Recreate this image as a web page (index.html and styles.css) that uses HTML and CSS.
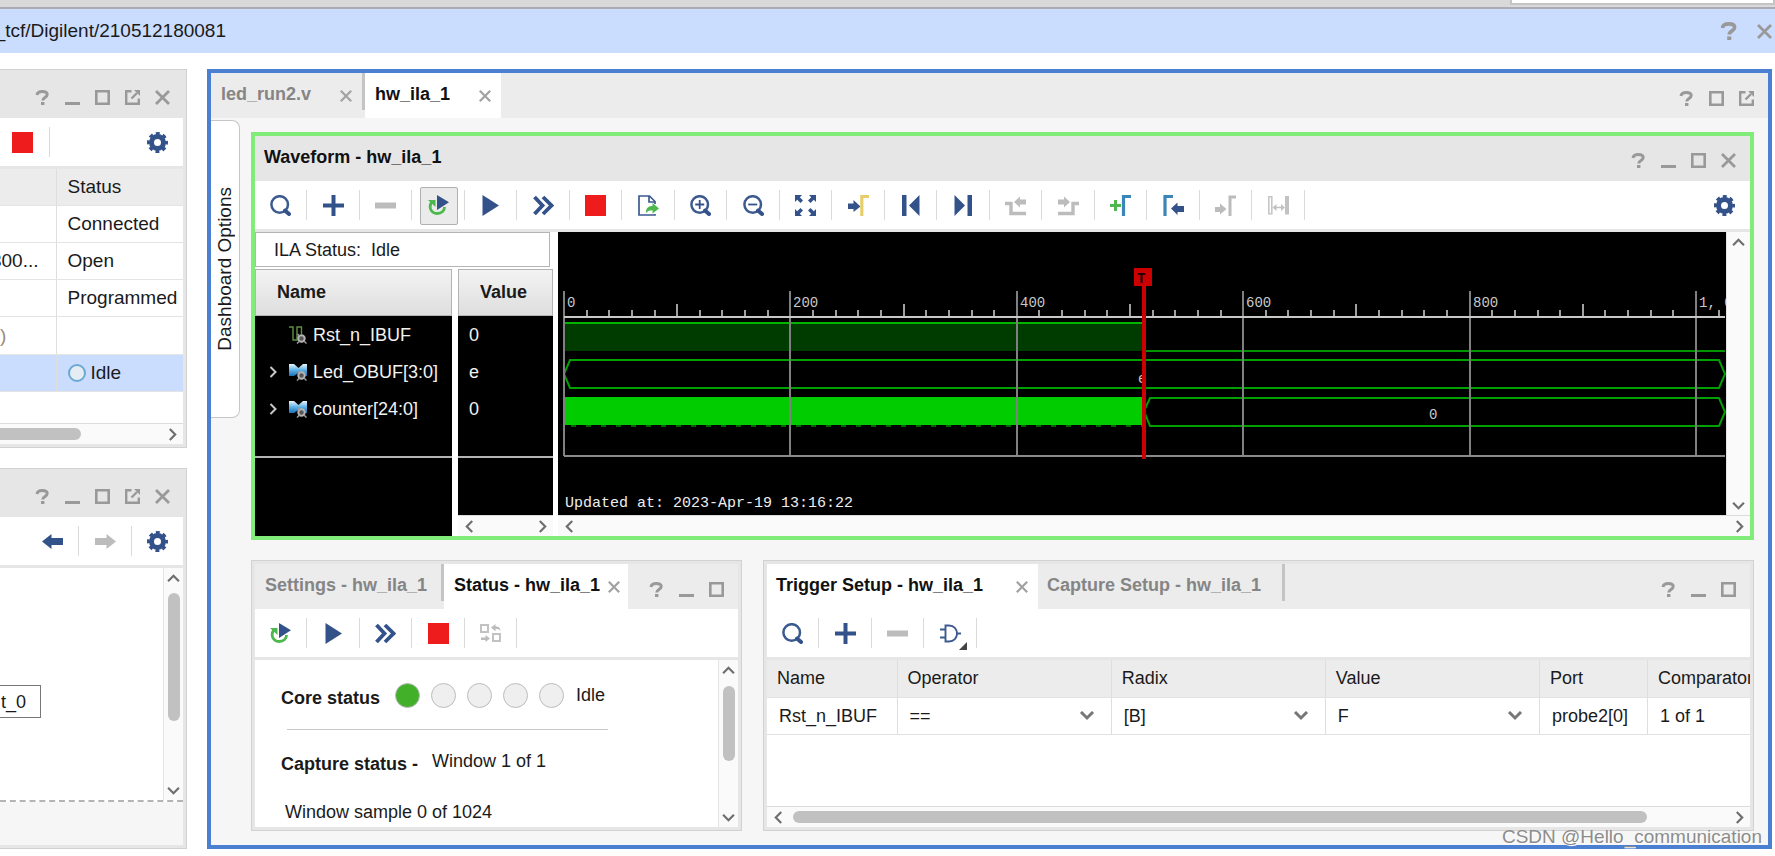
FILE: index.html
```html
<!DOCTYPE html>
<html lang="en">
<head>
    <meta charset="UTF-8">
    <meta name="viewport" content="width=device-width, initial-scale=1.0">
    <title>Hardware Manager - hw_ila_1</title>
    <link rel="stylesheet" href="styles.css">
</head>
<body>
    <!-- icon set -->
    <svg class="defs" aria-hidden="true">
        <defs>
            <linearGradient id="bus-fill" x1="0" y1="0" x2="0" y2="1">
                <stop offset="0" stop-color="#e8f6fd"/>
                <stop offset="0.5" stop-color="#5db2e6"/>
                <stop offset="1" stop-color="#1b6fb5"/>
            </linearGradient>
        </defs>
        <symbol id="help" viewBox="0 0 15 15"><path d="M2 5C2.300 2.500 4.500 1.600 7.400 1.600c3 0 4.800 1.100 4.800 3 0 2.800-4.500 2.800-4.500 5.800" fill="none" stroke="currentColor" stroke-width="3"/><path d="M6 12h3.400v3H6z" fill="currentColor"/></symbol>
        <symbol id="min" viewBox="0 0 15 15"><path d="M0 12h15v3H0z" fill="currentColor"/></symbol>
        <symbol id="max" viewBox="0 0 15 15"><path d="M1.300 1.300h12.400v12.400H1.300z" fill="none" stroke="currentColor" stroke-width="2.600"/></symbol>
        <symbol id="float" viewBox="0 0 15 15"><path d="M6.500 1.200H1.200v12.600h12.600V8.500M6.500 8.500l5.500-5.500" fill="none" stroke="currentColor" stroke-width="2.400"/><path d="M9 0h6v6z" fill="currentColor"/></symbol>
        <symbol id="close" viewBox="0 0 15 15"><path d="M1 1l13 13M14 1L1 14" fill="none" stroke="currentColor" stroke-width="2.800"/></symbol>
        <symbol id="search" viewBox="0 0 21 21"><circle cx="9.700" cy="9.500" r="8.300" fill="none" stroke="#3c5a8f" stroke-width="2.500"/><path d="M15 15.500l4 3.500" stroke="#34528a" stroke-width="4" stroke-linecap="round"/></symbol>
        <symbol id="plus" viewBox="0 0 21 21"><path d="M8.500 0h4v8.500H21v4h-8.500V21h-4v-8.500H0v-4h8.500z" fill="#34528a"/></symbol>
        <symbol id="minus" viewBox="0 0 21 21"><path d="M0 7.500h21v6H0z" fill="#bcbcbc"/></symbol>
        <symbol id="rerun" viewBox="0 0 21 21"><path d="M4 6.500C0 12 3 18.500 9 18.500c5 0 7.500-3 7.500-6.500" fill="none" stroke="#4cb84e" stroke-width="2.800"/><path d="M0 5h7.500v7z" fill="#4cb84e"/><path d="M9 0l12 7.200L9 15z" fill="#34528a"/></symbol>
        <symbol id="play" viewBox="0 0 21 21"><path d="M2.500 0L19 10.500 2.500 21z" fill="#34528a"/></symbol>
        <symbol id="forward" viewBox="0 0 21 21"><path d="M1.500 2l8 8.500-8 8.500M10 2l8.500 8.500L10 19" fill="none" stroke="#34528a" stroke-width="3.800"/></symbol>
        <symbol id="stop" viewBox="0 0 21 21"><path d="M0 0h21v21H0z" fill="#ee1c1c"/></symbol>
        <symbol id="export" viewBox="0 0 21 21"><path d="M17 9V6.500L11.500 1H1v19h16v-1M11 1v6h6" fill="none" stroke="#3c5a8f" stroke-width="1.700"/><path d="M8 18c0-5 2-7 6.500-7V8l6.500 5.500-6.500 5v-3.200c-3 0-4.500.7-6.500 2.700z" fill="#4cb84e"/></symbol>
        <symbol id="zoom-in" viewBox="0 0 21 21"><use href="#search"/><path d="M9.700 5v9M5.200 9.500h9" stroke="#34528a" stroke-width="1.800"/></symbol>
        <symbol id="zoom-out" viewBox="0 0 21 21"><use href="#search"/><path d="M5.200 9.500h9" stroke="#34528a" stroke-width="1.800"/></symbol>
        <symbol id="fit" viewBox="0 0 21 21"><path d="M0 0h7L4.800 2.200 8 5.500 5.500 8 2.200 4.800 0 7zM21 0v7l-2.200-2.200L15.500 8 13 5.500l3.200-3.300L14 0zM0 21v-7l2.200 2.200L5.500 13 8 15.500l-3.200 3.300L7 21zM21 21h-7l2.200-2.200-3.200-3.300 2.500-2.500 3.300 3.200L21 14z" fill="#34528a"/></symbol>
        <symbol id="to-cursor" viewBox="0 0 21 21"><path d="M0 8.500h5.500V5l7 6.500-7 5.500v-3H0z" fill="#34528a"/><path d="M13.800 21V1.500H21" fill="none" stroke="#e6cf6b" stroke-width="3.200"/></symbol>
        <symbol id="first" viewBox="0 0 21 21"><path d="M2 0h4.500v21H2zM19.500 0v21L9 10.500z" fill="#34528a"/></symbol>
        <symbol id="last" viewBox="0 0 21 21"><path d="M14.500 0H19v21h-4.500zM1.500 0v21L12 10.500z" fill="#34528a"/></symbol>
        <symbol id="prev-edge" viewBox="0 0 21 21"><path d="M0 8.500h6v10h15" fill="none" stroke="#bcbcbc" stroke-width="3.400"/><path d="M9 7l6-5.500V4.500h6v5h-6v3z" fill="#bcbcbc"/></symbol>
        <symbol id="next-edge" viewBox="0 0 21 21"><path d="M21 8.500h-6v10H0" fill="none" stroke="#bcbcbc" stroke-width="3.400"/><path d="M12 7L6 1.500V4.500H0v5h6v3z" fill="#bcbcbc"/></symbol>
        <symbol id="add-marker" viewBox="0 0 21 21"><path d="M4 5h3v4h4v3H7v4H4v-4H0V9h4z" fill="#4cb84e"/><path d="M13.500 21V1.500H21" fill="none" stroke="#3b86b8" stroke-width="3.200"/></symbol>
        <symbol id="prev-marker" viewBox="0 0 21 21"><path d="M2 21V1.500h8" fill="none" stroke="#3b86b8" stroke-width="3.200"/><path d="M8 13.500L14.500 7.500V11H21v6h-6.500v3z" fill="#34528a"/></symbol>
        <symbol id="next-marker" viewBox="0 0 21 21"><path d="M0 12h5V8.500l6.500 5.500-6.500 5.500V17H0z" fill="#bcbcbc"/><path d="M15 21V2h6" fill="none" stroke="#bcbcbc" stroke-width="3"/></symbol>
        <symbol id="measure" viewBox="0 0 21 21"><path d="M.8 1.800h3v17h-3z" fill="none" stroke="#c6c6c6" stroke-width="1.600"/><path d="M17 1h4v18.500h-4zM4.500 12.500l4-3.500v2.700h4.500V9l4 3.500-4 3.500v-2.700H8.500V16z" fill="#c2c2c2"/></symbol>
        <symbol id="gear" viewBox="0 0 21 21"><circle cx="10.500" cy="10.500" r="6" fill="none" stroke="#34528a" stroke-width="5"/><circle cx="10.500" cy="10.500" r="9" fill="none" stroke="#34528a" stroke-width="3" stroke-dasharray="3.900 3.168" stroke-dashoffset="1.950"/></symbol>
        <symbol id="back" viewBox="0 0 21 21"><path d="M0 10.500L9.500 3v4H21v7H9.500v4z" fill="#34528a"/></symbol>
        <symbol id="next" viewBox="0 0 21 21"><path d="M21 10.500L11.500 3v4H0v7h11.500v4z" fill="#bcbcbc"/></symbol>
        <symbol id="swap" viewBox="0 0 21 21"><path d="M1 2h7v7H1zM13 11h7v7h-7z" fill="none" stroke="#c2c2c2" stroke-width="2"/><path d="M11 4.500l4.500-3.500v2.500c3.500 0 4.500 1 5 4.500-1.500-2-2.500-2-5-2v2.500zM10 15.500L5.500 12v2.500H1v2.500h4.500V19z" fill="#bcbcbc"/></symbol>
        <symbol id="gate" viewBox="0 0 27 27"><path d="M5.500 2.500H9c5 0 8 3.500 8 8s-3 8-8 8H5.500zM0 6.500h5.500M0 14.500h5.500M17 10.500h4" fill="none" stroke="#3c5a8f" stroke-width="1.900"/><path d="M27 19v8h-8z" fill="#444"/></symbol>
        <symbol id="left" viewBox="0 0 12 12"><path d="M8.500 1L3.500 6l5 5" fill="none" stroke="currentColor" stroke-width="2"/></symbol>
        <symbol id="right" viewBox="0 0 12 12"><path d="M3.500 1l5 5-5 5" fill="none" stroke="currentColor" stroke-width="2"/></symbol>
        <symbol id="up" viewBox="0 0 12 12"><path d="M1 8.500l5-5 5 5" fill="none" stroke="currentColor" stroke-width="2"/></symbol>
        <symbol id="down" viewBox="0 0 12 12"><path d="M1 3.500l5 5 5-5" fill="none" stroke="currentColor" stroke-width="2"/></symbol>
        <symbol id="probe" viewBox="0 0 18 18"><circle cx="12.500" cy="12.500" r="3.200" fill="#555" stroke="#b5b5b5" stroke-width="2"/><path d="M8 17.500l2.500-2.500M17.500 17.500L15 15M8.500 8l2 2" stroke="#9a9a9a" stroke-width="1.500"/></symbol>
        <symbol id="net" viewBox="0 0 18 18"><path d="M0 1h4v13h4V1h4.500v7" fill="none" stroke="#5f8f45" stroke-width="1.400"/><use href="#probe"/></symbol>
        <symbol id="bus" viewBox="0 0 18 18"><path d="M0 1h5l4.500 4L14 1h4v12h-4l-4.500-3L5 13H0z" fill="url(#bus-fill)"/><use href="#probe"/></symbol>
    </svg>

    <div class="topstrip"><input class="quick" type="text" aria-label="Quick access"></div>
    <header class="address">
        <span class="path">x_tcf/Digilent/210512180081</span>
        <button class="wbtn big" aria-label="Help"><svg><use href="#help"/></svg></button>
        <button class="wbtn" aria-label="Close"><svg><use href="#close"/></svg></button>
    </header>

    <div class="workspace">
        <aside class="side">
            <section class="panel hardware">
                <div class="titlebar">
                    <button class="wbtn" aria-label="Help"><svg><use href="#help"/></svg></button>
                    <button class="wbtn" aria-label="Minimize"><svg><use href="#min"/></svg></button>
                    <button class="wbtn" aria-label="Maximize"><svg><use href="#max"/></svg></button>
                    <button class="wbtn" aria-label="Float"><svg><use href="#float"/></svg></button>
                    <button class="wbtn" aria-label="Close"><svg><use href="#close"/></svg></button>
                </div>
                <div class="toolbar">
                    <div class="tools cut"><button class="tool" aria-label="Stop"><svg><use href="#stop"/></svg></button></div>
                    <button class="settings" aria-label="Settings"><svg><use href="#gear"/></svg></button>
                </div>
                <table class="devices">
                    <thead><tr><th></th><th>Status</th></tr></thead>
                    <tbody>
                        <tr><td></td><td>Connected</td></tr>
                        <tr><td><div class="clip">300...</div></td><td>Open</td></tr>
                        <tr><td></td><td>Programmed</td></tr>
                        <tr><td class="muted">)</td><td></td></tr>
                        <tr class="selected"><td></td><td><span class="dot"></span>Idle</td></tr>
                    </tbody>
                </table>
                <div class="hscroll">
                    <div class="track"><div class="thumb short"></div></div>
                    <button aria-label="Scroll right"><svg><use href="#right"/></svg></button>
                </div>
            </section>
            <section class="panel properties">
                <div class="titlebar">
                    <button class="wbtn" aria-label="Help"><svg><use href="#help"/></svg></button>
                    <button class="wbtn" aria-label="Minimize"><svg><use href="#min"/></svg></button>
                    <button class="wbtn" aria-label="Maximize"><svg><use href="#max"/></svg></button>
                    <button class="wbtn" aria-label="Float"><svg><use href="#float"/></svg></button>
                    <button class="wbtn" aria-label="Close"><svg><use href="#close"/></svg></button>
                </div>
                <div class="toolbar">
                    <div class="tools nav">
                        <button class="tool" aria-label="Back"><svg><use href="#back"/></svg></button>
                        <button class="tool" aria-label="Forward"><svg><use href="#next"/></svg></button>
                    </div>
                    <button class="settings" aria-label="Settings"><svg><use href="#gear"/></svg></button>
                </div>
                <div class="props">
                    <div class="props-view"><div class="node">t_0</div></div>
                    <div class="vscroll">
                        <button aria-label="Scroll up"><svg><use href="#up"/></svg></button>
                        <div class="track"><div class="thumb tall"></div></div>
                        <button aria-label="Scroll down"><svg><use href="#down"/></svg></button>
                    </div>
                </div>
                <div class="props-foot"></div>
            </section>
        </aside>

        <main class="dashboard">
            <div class="tabbar">
                <button class="tab">led_run2.v <svg><use href="#close"/></svg></button>
                <span class="sep"></span>
                <button class="tab active">hw_ila_1 <svg><use href="#close"/></svg></button>
                <div class="wbtns">
                    <button class="wbtn" aria-label="Help"><svg><use href="#help"/></svg></button>
                    <button class="wbtn" aria-label="Maximize"><svg><use href="#max"/></svg></button>
                    <button class="wbtn" aria-label="Float"><svg><use href="#float"/></svg></button>
                </div>
            </div>
            <div class="board">
                <button class="options"><span>Dashboard Options</span></button>
                <div class="stack">
                    <section class="waveform">
                        <div class="titlebar">
                            <h2>Waveform - hw_ila_1</h2>
                            <button class="wbtn" aria-label="Help"><svg><use href="#help"/></svg></button>
                            <button class="wbtn" aria-label="Minimize"><svg><use href="#min"/></svg></button>
                            <button class="wbtn" aria-label="Maximize"><svg><use href="#max"/></svg></button>
                            <button class="wbtn" aria-label="Close"><svg><use href="#close"/></svg></button>
                        </div>
                        <div class="toolbar">
                            <div class="tools">
                                <button class="tool" aria-label="Search"><svg><use href="#search"/></svg></button>
                                <button class="tool" aria-label="Add"><svg><use href="#plus"/></svg></button>
                                <button class="tool" aria-label="Remove"><svg><use href="#minus"/></svg></button>
                                <button class="tool pressed" aria-label="Auto re-trigger"><svg><use href="#rerun"/></svg></button>
                                <button class="tool" aria-label="Run trigger"><svg><use href="#play"/></svg></button>
                                <button class="tool" aria-label="Run immediate"><svg><use href="#forward"/></svg></button>
                                <button class="tool" aria-label="Stop"><svg><use href="#stop"/></svg></button>
                                <button class="tool" aria-label="Export"><svg><use href="#export"/></svg></button>
                                <button class="tool" aria-label="Zoom in"><svg><use href="#zoom-in"/></svg></button>
                                <button class="tool" aria-label="Zoom out"><svg><use href="#zoom-out"/></svg></button>
                                <button class="tool" aria-label="Zoom fit"><svg><use href="#fit"/></svg></button>
                                <button class="tool" aria-label="Go to cursor"><svg><use href="#to-cursor"/></svg></button>
                                <button class="tool" aria-label="First"><svg><use href="#first"/></svg></button>
                                <button class="tool" aria-label="Last"><svg><use href="#last"/></svg></button>
                                <button class="tool" aria-label="Previous transition"><svg><use href="#prev-edge"/></svg></button>
                                <button class="tool" aria-label="Next transition"><svg><use href="#next-edge"/></svg></button>
                                <button class="tool" aria-label="Add marker"><svg><use href="#add-marker"/></svg></button>
                                <button class="tool" aria-label="Previous marker"><svg><use href="#prev-marker"/></svg></button>
                                <button class="tool" aria-label="Next marker"><svg><use href="#next-marker"/></svg></button>
                                <button class="tool" aria-label="Measure"><svg><use href="#measure"/></svg></button>
                            </div>
                            <button class="settings" aria-label="Settings"><svg><use href="#gear"/></svg></button>
                        </div>
                        <div class="wave-body">
                            <div class="signals">
                                <div class="ila-status">ILA Status:&nbsp; Idle</div>
                                <div class="cols">
                                    <div class="col names">
                                        <div class="colhead">Name</div>
                                        <div class="rows">
                                            <div class="row"><span class="twist"></span><svg class="sig"><use href="#net"/></svg>Rst_n_IBUF</div>
                                            <div class="row"><svg class="twist"><use href="#right"/></svg><svg class="sig"><use href="#bus"/></svg>Led_OBUF[3:0]</div>
                                            <div class="row"><svg class="twist"><use href="#right"/></svg><svg class="sig"><use href="#bus"/></svg>counter[24:0]</div>
                                        </div>
                                    </div>
                                    <div class="col values">
                                        <div class="colhead">Value</div>
                                        <div class="rows">
                                            <div class="row">0</div>
                                            <div class="row">e</div>
                                            <div class="row">0</div>
                                        </div>
                                        <div class="hscroll">
                                            <button aria-label="Scroll left"><svg><use href="#left"/></svg></button>
                                            <div class="track"></div>
                                            <button aria-label="Scroll right"><svg><use href="#right"/></svg></button>
                                        </div>
                                    </div>
                                </div>
                            </div>
                            <div class="plot">
                                <div class="plot-main">
                                    <div class="canvas">
                                        <svg class="wave" width="1169" height="283" viewBox="0 1 1169 283">
                                            <path d="M6 92h579v28H6z" fill="#003c00"/>
                                            <path d="M6 92h579" stroke="#00b400" stroke-width="2"/>
                                            <path d="M588 120h579" stroke="#009400" stroke-width="2"/>
                                            <path class="busline" d="M6 143l6-14h1149l6 14-6 14H12z"/>
                                            <path d="M6 166h579v28H6z" fill="#00cc00"/>
                                            <path d="M13 195h572" stroke="#00cc00" stroke-dasharray="5 10"/>
                                            <path class="busline" d="M586 180l6-13h569l6 14-6 14H592z"/>
                                            <text x="580" y="152">e</text>
                                            <text x="871" y="188">0</text>
                                            <g id="ruler"></g>
                                            <path d="M6 225h1161" stroke="#8a8a8a" stroke-width="2"/>
                                            <path d="M6 86h1161" stroke="#c8c8c8" stroke-width="2"/>
                                            <path d="M576 37h18v18h-6v173h-4V55h-8z" fill="#cc0000"/>
                                            <text class="flag" x="579" y="52">T</text>
                                            <text class="stamp" x="7" y="276">Updated at: 2023-Apr-19 13:16:22</text>
                                        </svg>
                                    </div>
                                    <div class="vscroll">
                                        <button aria-label="Scroll up"><svg><use href="#up"/></svg></button>
                                        <div class="track"></div>
                                        <button aria-label="Scroll down"><svg><use href="#down"/></svg></button>
                                    </div>
                                </div>
                                <div class="hscroll">
                                    <button aria-label="Scroll left"><svg><use href="#left"/></svg></button>
                                    <div class="track"></div>
                                    <button aria-label="Scroll right"><svg><use href="#right"/></svg></button>
                                </div>
                            </div>
                        </div>
                    </section>

                    <div class="lower">
                        <section class="panel status">
                            <div class="tabbar">
                                <button class="tab">Settings - hw_ila_1</button>
                                <span class="sep"></span>
                                <button class="tab active near">Status - hw_ila_1 <svg><use href="#close"/></svg></button>
                                <div class="wbtns">
                                    <button class="wbtn" aria-label="Help"><svg><use href="#help"/></svg></button>
                                    <button class="wbtn" aria-label="Minimize"><svg><use href="#min"/></svg></button>
                                    <button class="wbtn" aria-label="Maximize"><svg><use href="#max"/></svg></button>
                                </div>
                            </div>
                            <div class="toolbar">
                                <div class="tools">
                                    <button class="tool" aria-label="Auto re-trigger"><svg><use href="#rerun"/></svg></button>
                                    <button class="tool" aria-label="Run trigger"><svg><use href="#play"/></svg></button>
                                    <button class="tool" aria-label="Run immediate"><svg><use href="#forward"/></svg></button>
                                    <button class="tool" aria-label="Stop"><svg><use href="#stop"/></svg></button>
                                    <button class="tool" aria-label="Swap"><svg><use href="#swap"/></svg></button>
                                </div>
                            </div>
                            <div class="status-body">
                                <div class="status-view">
                                    <div class="core">
                                        <b>Core status</b>
                                        <span class="leds"><i class="on"></i><i></i><i></i><i></i><i></i></span>
                                        <span>Idle</span>
                                    </div>
                                    <hr>
                                    <div class="capture"><b>Capture status -</b><span>Window 1 of 1</span></div>
                                    <p>Window sample 0 of 1024</p>
                                </div>
                                <div class="vscroll">
                                    <button aria-label="Scroll up"><svg><use href="#up"/></svg></button>
                                    <div class="track"><div class="thumb mid"></div></div>
                                    <button aria-label="Scroll down"><svg><use href="#down"/></svg></button>
                                </div>
                            </div>
                        </section>

                        <section class="panel trigger">
                            <div class="tabbar">
                                <button class="tab active">Trigger Setup - hw_ila_1 <svg><use href="#close"/></svg></button>
                                <button class="tab last">Capture Setup - hw_ila_1</button>
                                <span class="sep"></span>
                                <div class="wbtns">
                                    <button class="wbtn" aria-label="Help"><svg><use href="#help"/></svg></button>
                                    <button class="wbtn" aria-label="Minimize"><svg><use href="#min"/></svg></button>
                                    <button class="wbtn" aria-label="Maximize"><svg><use href="#max"/></svg></button>
                                </div>
                            </div>
                            <div class="toolbar">
                                <div class="tools">
                                    <button class="tool" aria-label="Search"><svg><use href="#search"/></svg></button>
                                    <button class="tool" aria-label="Add"><svg><use href="#plus"/></svg></button>
                                    <button class="tool" aria-label="Remove"><svg><use href="#minus"/></svg></button>
                                    <button class="tool gate" aria-label="Trigger condition"><svg><use href="#gate"/></svg></button>
                                </div>
                            </div>
                            <div class="table-view">
                                <table class="probes">
                                    <colgroup><col class="c-name"><col class="c-pick"><col class="c-pick"><col class="c-pick"><col class="c-port"><col class="c-comp"></colgroup>
                                    <thead>
                                        <tr><th>Name</th><th>Operator</th><th>Radix</th><th>Value</th><th>Port</th><th>Comparator</th></tr>
                                    </thead>
                                    <tbody>
                                        <tr>
                                            <td>Rst_n_IBUF</td>
                                            <td><select aria-label="Operator"><option>==</option></select></td>
                                            <td><select aria-label="Radix"><option>[B]</option></select></td>
                                            <td><select aria-label="Value"><option>F</option></select></td>
                                            <td>probe2[0]</td>
                                            <td>1 of 1</td>
                                        </tr>
                                    </tbody>
                                </table>
                            </div>
                            <div class="hscroll">
                                <button aria-label="Scroll left"><svg><use href="#left"/></svg></button>
                                <div class="track"><div class="thumb long"></div></div>
                                <button aria-label="Scroll right"><svg><use href="#right"/></svg></button>
                            </div>
                        </section>
                    </div>
                </div>
            </div>
        </main>
    </div>
    <div class="watermark">CSDN @Hello_communication</div>

    <script>
    // time ruler: a labelled line every 200 samples, a tick every 20
    const ruler = document.getElementById("ruler");
    const labels = ["0", "200", "400", "600", "800", "1, 0"];
    let marks = "";
    for (let i = 0; i <= 51; i++) {
        let x = Math.round(6 + i * 22.64);
        if (i % 10 === 0) {
            marks += `<path class="grid" d="M${x} 60v165"/><text x="${x + 3}" y="76">${labels[i / 10]}</text>`;
        } else {
            let top = i % 5 === 0 ? 73 : 79;
            marks += `<path class="tick" d="M${x} ${top}V86"/>`;
        }
    }
    ruler.innerHTML = marks;
    </script>
</body>
</html>
```
FILE: styles.css
```css
* {
    box-sizing: border-box;
}
body {
    margin: 0;
    height: 100vh;
    display: flex;
    flex-direction: column;
    overflow: hidden;
    background: #fff;
    color: #1a1a1a;
    font-family: "Liberation Sans", Arial, sans-serif;
    font-size: 18px;
    line-height: 22px;
}
button {
    border: none;
    background: none;
    padding: 0;
    margin: 0;
    font: inherit;
    color: inherit;
    display: flex;
    align-items: center;
    justify-content: center;
}
svg {
    display: block;
    flex: none;
}
.defs {
    position: absolute;
    width: 0;
    height: 0;
}

/* top of the window */
.topstrip {
    height: 9px;
    flex: none;
    display: flex;
    justify-content: flex-end;
    background: #d9d9d9;
    border-bottom: 2px solid #a9adb3;
}
.quick {
    width: 265px;
    height: 5px;
    padding: 0;
    background: #fff;
    border: 2px solid #c4c4c4;
    border-top: none;
}
.address {
    height: 44px;
    flex: none;
    display: flex;
    align-items: center;
    background: #cbddff;
}
.path {
    width: 226px;
    display: flex;
    justify-content: flex-end;
    overflow: hidden;
    margin-right: auto;
    font-size: 19px;
}
.wbtn {
    width: 30px;
    height: 30px;
    color: #999;
}
.wbtn svg {
    width: 15px;
    height: 15px;
}
.address .wbtn {
    margin-right: -4px;
}
.address .big {
    margin-right: 5px;
}
.big svg {
    width: 18px;
    height: 18px;
}
.workspace {
    flex: 1;
    min-height: 0;
    display: flex;
    gap: 20px;
    padding: 16px 3px 7px 0;
}

/* shared panel parts */
.panel {
    display: flex;
    flex-direction: column;
    min-width: 0;
    background: #fff;
    border: 1px solid #d2d2d2;
    box-shadow: inset 0 0 0 3px #e6e6e6;
    padding: 3px;
}
.titlebar {
    height: 45px;
    flex: none;
    display: flex;
    align-items: center;
    justify-content: flex-end;
    padding: 4px 7px 0 0;
    background: #e6e6e6;
}
h2 {
    margin: 0 auto 8px 0;
    padding-left: 9px;
    font-size: 18px;
    color: #111;
}
.toolbar {
    height: 51px;
    flex: none;
    display: flex;
    justify-content: space-between;
    align-items: center;
    background: #fff;
    border-bottom: 3px solid #e6e6e6;
}
.tools {
    display: flex;
}
.tool {
    width: 52px;
    height: 30px;
    border-right: 1px solid #dadada;
}
.tool:nth-child(even) {
    width: 53px;
}
.tool svg,
.settings svg {
    width: 21px;
    height: 21px;
}
.pressed {
    position: relative;
}
.pressed::before {
    content: "";
    position: absolute;
    left: 8px;
    top: -3px;
    width: 36px;
    height: 36px;
    background: #ebebeb;
    border: 1px solid #b0b0b0;
    border-radius: 2px;
}
.pressed svg {
    position: relative;
}
.gate svg {
    width: 27px;
    height: 27px;
    margin: 6px 0 0 6px;
}
.settings {
    width: 51px;
    height: 30px;
}
.tabbar {
    height: 45px;
    flex: none;
    display: flex;
    background: #ececec;
}
.tab {
    gap: 29px;
    padding: 0 10px 3px;
    font-weight: bold;
    color: #858585;
    white-space: nowrap;
}
.tab svg {
    width: 12px;
    height: 12px;
    margin-top: 4px;
    color: #a2a2a2;
}
.tab.active {
    background: #fff;
    color: #111;
}
.tab.near {
    gap: 8px;
    padding-right: 8px;
}
.trigger .tab {
    gap: 33px;
}
.trigger .tab.active,
.trigger .tab.last {
    padding-left: 9px;
}
.tab.last {
    padding-right: 21px;
}
.sep {
    width: 3px;
    height: 37px;
    background: #c4c4c4;
}
.wbtns {
    display: flex;
    align-items: center;
    margin-left: auto;
    padding: 5px 7px 0 0;
}

/* scroll bars */
.hscroll,
.vscroll {
    flex: none;
    display: flex;
    background: #fafafa;
    color: #6e6e6e;
}
.hscroll {
    height: 21px;
    align-items: center;
    border-top: 1px solid #dcdcdc;
}
.vscroll {
    width: 20px;
    flex-direction: column;
    align-items: center;
    border-left: 1px solid #e4e4e4;
}
.hscroll button,
.vscroll button {
    width: 22px;
    height: 20px;
}
.hscroll svg,
.vscroll svg {
    width: 13px;
    height: 13px;
}
.track {
    flex: 1;
    min-height: 0;
}
.thumb {
    border-radius: 6px;
    background: #c1c1c1;
    width: 12px;
    height: 12px;
}
.thumb.short {
    width: 81px;
    border-radius: 0 6px 6px 0;
}
.thumb.long {
    width: 91%;
    margin-left: 4px;
}
.thumb.tall {
    height: 128px;
    margin-top: 5px;
}
.thumb.mid {
    height: 75px;
    margin-top: 6px;
}

/* left side */
.side {
    width: 187px;
    flex: none;
    display: flex;
    flex-direction: column;
    gap: 20px;
}
.side .panel {
    border-left: none;
    padding-left: 0;
    box-shadow: inset -3px 0 0 #e6e6e6, inset 0 -3px 0 #e6e6e6, inset 0 3px 0 #e6e6e6;
}
.hardware {
    flex: none;
}
.side .titlebar {
    padding-right: 6px;
}
.cut .tool {
    width: 50px;
    padding-right: 4px;
}
.nav {
    margin-left: 27px;
}
.devices {
    width: 100%;
    height: 223px;
    margin-bottom: 31px;
    border-collapse: collapse;
    table-layout: fixed;
    font-size: 19px;
}
.devices th {
    height: 36px;
    background: #ececec;
    font-weight: normal;
    text-align: left;
}
.devices td,
.devices th {
    padding: 0;
    white-space: nowrap;
    border-bottom: 1px solid #e4e4e4;
}
.devices th:first-child,
.devices td:first-child {
    width: 56px;
    border-right: 1px solid #dedede;
}
.devices th + th,
.devices td + td {
    padding-left: 11px;
}
.clip {
    display: flex;
    justify-content: flex-end;
    overflow: hidden;
    padding-right: 17px;
}
.muted {
    color: #9a8a78;
}
.selected {
    background: #cbddff;
}
.dot {
    display: inline-block;
    width: 18px;
    height: 18px;
    margin-right: 5px;
    vertical-align: -3px;
    border: 2px solid #6aa9d4;
    border-radius: 50%;
    background: #e6edf2;
}
.properties {
    flex: 1;
    min-height: 0;
}
.props {
    height: 234px;
    display: flex;
    border-bottom: 2px dashed #b4b4b4;
}
.props-view {
    flex: 1;
    padding-top: 117px;
}
.node {
    width: 41px;
    height: 33px;
    display: flex;
    align-items: center;
    justify-content: flex-end;
    padding-right: 14px;
    border: 1px solid #777;
    border-left: none;
}
.props-foot {
    flex: 1;
    background: #f6f6f6;
}

/* dashboard */
.dashboard {
    flex: 1;
    min-width: 0;
    display: flex;
    flex-direction: column;
    border: 4px solid #4a7fd1;
    background: #f6f6f6;
}
.board {
    flex: 1;
    min-height: 0;
    display: flex;
    gap: 11px;
    padding-right: 14px;
}
.options {
    width: 29px;
    height: 298px;
    flex: none;
    margin-top: 2px;
    background: #fff;
    border: 1px solid #c6c6c6;
    border-left: none;
    border-radius: 0 8px 8px 0;
}
.options span {
    writing-mode: vertical-rl;
    transform: rotate(180deg);
    font-size: 19px;
}
.stack {
    flex: 1;
    min-width: 0;
    display: flex;
    flex-direction: column;
    gap: 20px;
    padding: 14px 0;
}
.waveform {
    display: flex;
    flex-direction: column;
    border: 4px solid #82ec7a;
    background: #fff;
}
.wave-body {
    display: flex;
    gap: 5px;
}
.signals {
    width: 298px;
    flex: none;
    display: flex;
    flex-direction: column;
}
.ila-status {
    height: 35px;
    width: 295px;
    margin-bottom: 2px;
    padding: 6px 18px;
    border: 1px solid #b4b4b4;
}
.cols {
    flex: 1;
    display: flex;
    gap: 6px;
}
.col {
    display: flex;
    flex-direction: column;
    background: #000;
    color: #f2f2f2;
}
.names {
    width: 197px;
}
.values {
    flex: 1;
}
.colhead {
    height: 47px;
    padding: 11px 21px;
    border: 1px solid #b4b4b4;
    background: linear-gradient(#f3f3f3, #dededf);
    color: #1a1a1a;
    font-weight: bold;
}
.rows {
    height: 142px;
    border-bottom: 2px solid #b4b4b4;
    margin-bottom: auto;
}
.row {
    height: 37px;
    display: flex;
    align-items: center;
}
.names .row {
    padding-left: 12px;
}
.values .row {
    padding-left: 11px;
}
.twist {
    width: 12px;
    height: 12px;
    margin-right: 10px;
    color: #c8c8c8;
}
.sig {
    width: 18px;
    height: 18px;
    margin-right: 6px;
}
.plot {
    flex: 1;
    min-width: 0;
}
.plot-main {
    display: flex;
}
.canvas {
    flex: 1;
    min-width: 0;
    overflow: hidden;
    background: #000;
}
.canvas + .vscroll {
    width: 24px;
}
.wave text {
    font-family: "Liberation Mono", monospace;
    font-size: 14px;
    fill: #c8c8c8;
}
.wave .stamp {
    font-size: 15px;
    fill: #eee;
}
.wave .flag {
    font-weight: bold;
    fill: #200;
}
.busline {
    fill: none;
    stroke: #00a000;
    stroke-width: 2;
}
.grid {
    stroke: #808080;
    stroke-width: 2;
}
.tick {
    stroke: #a0a0a0;
    stroke-width: 2;
}

/* lower panels */
.lower {
    flex: 1;
    min-height: 0;
    display: grid;
    grid-template-columns: 491px 1fr;
    gap: 21px;
}
.status .tab:first-child {
    padding-right: 14px;
}
.status-body {
    flex: 1;
    min-height: 0;
    display: flex;
}
.status-view {
    flex: 1;
    padding: 21px 26px 0;
}
.core {
    display: flex;
    align-items: center;
}
.core b {
    padding-top: 6px;
}
.leds {
    display: flex;
    gap: 11px;
    margin: 0 12px 0 15px;
}
.leds i {
    width: 25px;
    height: 25px;
    border: 1px solid #bcbcbc;
    border-radius: 50%;
    background: #efefef;
}
.leds .on {
    background: #43b02a;
}
hr {
    width: 321px;
    margin: 20px 0 20px 6px;
    border: none;
    border-top: 1px solid #c8c8c8;
}
.capture {
    display: flex;
    gap: 14px;
}
.capture b {
    padding-top: 3px;
}
.status-view p {
    margin: 26px 4px 0;
}
.table-view {
    flex: 1;
    min-height: 0;
    overflow: hidden;
}
.probes {
    width: 100%;
    min-width: 1021px;
    border-collapse: collapse;
    table-layout: fixed;
}
.c-name {
    width: 130px;
}
.c-port {
    width: 108px;
}
.c-comp {
    width: 140px;
}
.probes th,
.probes td {
    height: 37px;
    padding: 0 10px;
    border-right: 1px solid #dedede;
    border-bottom: 1px solid #e2e2e2;
    font-weight: normal;
    text-align: left;
    white-space: nowrap;
}
.probes th {
    background: #ececec;
}
.probes td {
    padding-left: 12px;
}
select {
    width: 100%;
    padding: 0;
    border: none;
    appearance: none;
    font: inherit;
    color: inherit;
    background: url('data:image/svg+xml,<svg xmlns="http://www.w3.org/2000/svg" width="16" height="10"><path d="M2 1l6 6 6-6" fill="none" stroke="%23777" stroke-width="3"/></svg>') no-repeat right 6px center;
}

.watermark {
    position: absolute;
    right: 13px;
    bottom: 8px;
    font-size: 19px;
    color: #8c8c8c;
    text-shadow: 1px 1px 0 #fff;
}
```
